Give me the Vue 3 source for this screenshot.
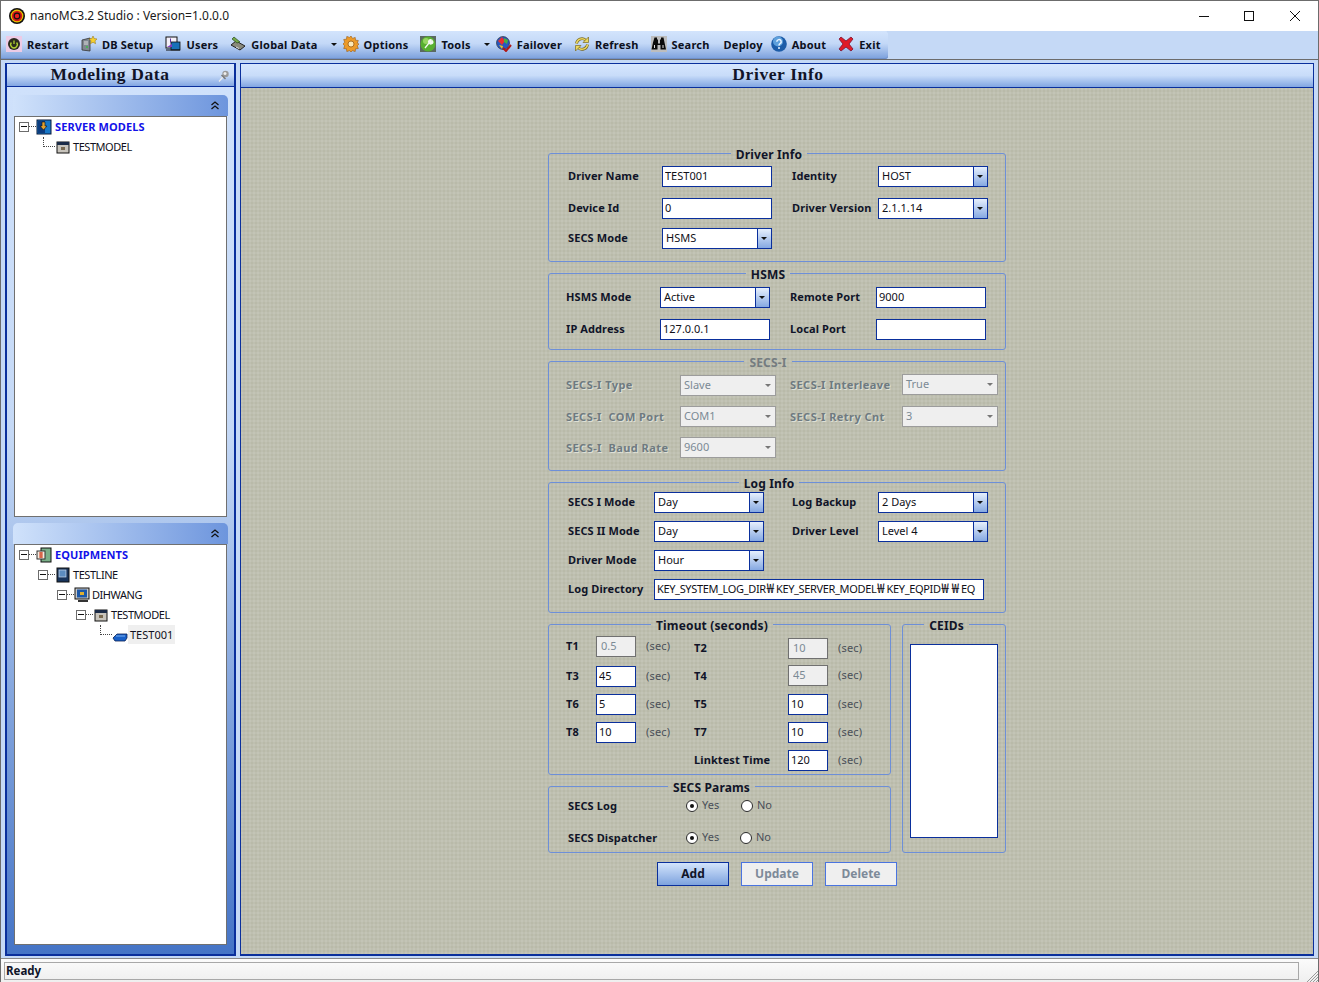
<template>
  <div class="window">
    <div class="titlebar">
      <svg class="logo" viewBox="0 0 16 16" width="16" height="16">
        <circle cx="8" cy="8" r="8" fill="#111"/>
        <circle cx="8" cy="8" r="6.4" fill="#e8c800"/>
        <circle cx="8" cy="8" r="5.2" fill="#d81818"/>
        <circle cx="8" cy="8" r="3.4" fill="#111"/>
        <circle cx="8" cy="8" r="2.2" fill="#e82020"/>
      </svg>
      <span class="title">nanoMC3.2 Studio : Version=1.0.0.0</span>
      <div class="winbtns">
        <svg width="12" height="12" viewBox="0 0 12 12"><path d="M1 6.5h10" stroke="#111" fill="none"/></svg>
        <svg width="12" height="12" viewBox="0 0 12 12"><rect x="1.5" y="1.5" width="9" height="9" stroke="#111" fill="none"/></svg>
        <svg width="12" height="12" viewBox="0 0 12 12"><path d="M1 1l10 10M11 1L1 11" stroke="#111" fill="none"/></svg>
      </div>
    </div>

    <div class="band">
      <div class="toolbar">
        <div class="tool">
          <svg viewBox="0 0 16 16"><rect width="16" height="16" fill="#eccbe6"/><circle cx="8" cy="8" r="6" fill="#2a2a1e"/><path d="M5.4 6.5a3.3 3.3 0 1 0 5.2 0M8 4.5v3.5" stroke="#b0d030" stroke-width="1.3" fill="none"/></svg>
          <span>Restart</span>
        </div>
        <div class="tool">
          <svg viewBox="0 0 16 16"><path d="M1 4l8-2v13l-8-1z" fill="#808890" stroke="#333" stroke-width=".8"/><path d="M3 6h4M3 8h4" stroke="#ddd"/><path d="M5 11h2" stroke="#38c048" stroke-width="1.5"/><path d="M12 0l1.2 2.6 2.8.3-2 2 .6 2.8-2.6-1.4-2.6 1.4.6-2.8-2-2 2.800-.3z" fill="#f6d030" stroke="#8a6a10" stroke-width=".5"/></svg>
          <span>DB Setup</span>
        </div>
        <div class="tool">
          <svg viewBox="0 0 16 16"><rect x="1" y="1" width="11" height="11" fill="#f4f0fa" stroke="#111"/><rect x="6" y="6" width="9" height="8" fill="#1870b8" stroke="#111" stroke-width=".8"/><path d="M2 11l5-3v3z" fill="#8038c0"/><path d="M5.500 2.500v4" stroke="#6030a0"/><path d="M1 14h14" stroke="#111"/></svg>
          <span>Users</span>
        </div>
        <div class="tool">
          <svg viewBox="0 0 16 16"><path d="M1 9l5-4 9 5-5 4z" fill="#8a8a7c" stroke="#222"/><path d="M2 3l2-2 6 5-3 1z" fill="#74a848" stroke="#2a4a20" stroke-width=".7"/><path d="M6 11l3 1.500" stroke="#ddd"/></svg>
          <span>Global Data</span>
        </div>
        <i class="caret"></i>
        <div class="tool">
          <svg viewBox="0 0 16 16"><path d="M8 0l1.500 2.400 2.700-1 .3 2.800 2.800.3-1 2.700L16 8l-1.700 1.800 1 2.700-2.800.3-.3 2.800-2.700-1L8 16l-1.500-1.400-2.700 1-.3-2.800-2.800-.3 1-2.700L0 8l1.700-1.800-1-2.700 2.800-.3.3-2.800 2.700 1z" fill="#ec9a28" stroke="#9a5a10" stroke-width=".6"/><circle cx="8" cy="8" r="3" fill="#fbe9b8" stroke="#9a5a10" stroke-width=".8"/></svg>
          <span>Options</span>
        </div>
        <div class="tool">
          <svg viewBox="0 0 16 16"><rect width="16" height="16" fill="#5a6a60"/><circle cx="8" cy="8" r="7.500" fill="#58b030"/><circle cx="6" cy="5" r="3" fill="#a8e070" opacity=".8"/><path d="M5 12l4-5M9 7a2 2 0 0 1 2.500-3L10 5.500l1 1L12.500 5A2 2 0 0 1 9 7z" stroke="#f4f8f0" stroke-width="1.300" fill="#f4f8f0"/></svg>
          <span>Tools</span>
        </div>
        <i class="caret"></i>
        <div class="tool">
          <svg viewBox="0 0 16 16"><circle cx="7" cy="7" r="6.500" fill="#2858c0" stroke="#222" stroke-width=".6"/><path d="M2 5l4-4 3 4-3 4z" fill="#e83030"/><path d="M8 2l4 2-1 4-3-2z" fill="#48b040"/><path d="M3 9l4 1-1 3z" fill="#f0c020"/><path d="M7 12l3 3 5-6" stroke="#b01818" stroke-width="2" fill="none"/></svg>
          <span>Failover</span>
        </div>
        <div class="tool">
          <svg viewBox="0 0 16 16"><path d="M2.500 7.500A5.500 5.500 0 0 1 11.500 4" stroke="#7a6a20" stroke-width="2.800" fill="none"/><path d="M2.500 7.500A5.500 5.500 0 0 1 11.500 4" stroke="#ecd860" stroke-width="1.500" fill="none"/><path d="M14.500 1v5.500H9z" fill="#ecd860" stroke="#7a6a20" stroke-width=".7"/><path d="M13.500 8.500A5.500 5.500 0 0 1 4.500 12" stroke="#7a6a20" stroke-width="2.800" fill="none"/><path d="M13.500 8.500A5.500 5.500 0 0 1 4.500 12" stroke="#ecd860" stroke-width="1.500" fill="none"/><path d="M1.500 15V9.500H7z" fill="#ecd860" stroke="#7a6a20" stroke-width=".7"/></svg>
          <span>Refresh</span>
        </div>
        <div class="tool">
          <svg viewBox="0 0 16 16"><rect width="16" height="16" fill="#bdbdbd"/><path d="M3.500 1.500h2.500v2H7v4h2v-4h1v-2h2.500l1 5 1.500 7H9.500V9h-3v4.500H.5L2 6.500z" fill="#0a0a0a"/><path d="M3.500 9v3M12 9v3" stroke="#ddd"/></svg>
          <span>Search</span>
        </div>
        <div class="tool deploy"><span>Deploy</span></div>
        <div class="tool about">
          <svg viewBox="0 0 16 16"><circle cx="8" cy="8" r="7.800" fill="#1c5ca8"/><circle cx="7" cy="5.500" r="5" fill="#5ea0dc"/><path d="M5.800 5.800a2.200 2.200 0 1 1 3.300 1.900c-.8.500-1.100.8-1.100 1.800" stroke="#eaf4ff" stroke-width="1.500" fill="none"/><circle cx="8" cy="12" r="1" fill="#eaf4ff"/></svg>
          <span>About</span>
        </div>
        <div class="tool">
          <svg viewBox="0 0 16 16"><path d="M1 3l2-2 5 4 5-4 2 2-4 5 4 5-2 2-5-4-5 4-2-2 4-5z" fill="#e01c28" stroke="#7c1030" stroke-width=".8"/></svg>
          <span>Exit</span>
        </div>
      </div>
    </div>

    <div class="main">
      <aside class="side">
        <div class="panel-head side-head">
          <h2>Modeling Data</h2>
          <svg class="pin" viewBox="0 0 12 12" width="12" height="12"><path d="M5 7L1 11.500" stroke="#eee" stroke-width="1.200"/><circle cx="7.500" cy="4" r="3.200" fill="#9a9a9a"/><circle cx="7" cy="3.500" r="1.500" fill="#eee"/><path d="M3.500 5l4 4" stroke="#777" stroke-width="1.500"/></svg>
        </div>
        <div class="side-body">
          <section class="tree-sec">
            <div class="sec-head"><svg width="8" height="9" viewBox="0 0 8 9"><path d="M.5 4L4 1l3.500 3M.5 8L4 5l3.500 3" stroke="#111" stroke-width="1.300" fill="none"/></svg></div>
            <div class="tree">
              <div v-for="n in serverTree" :key="n.name" class="node" :style="{ paddingLeft: 4 + n.level * 19 + 'px' }">
                <i v-if="n.open" class="box"></i>
                <i v-else class="elbow"></i>
                <i class="dash"></i>
                <TreeIcon :kind="n.icon" />
                <span :class="{ root: n.level === 0 }">{{ n.name }}</span>
              </div>
            </div>
          </section>
          <section class="tree-sec">
            <div class="sec-head"><svg width="8" height="9" viewBox="0 0 8 9"><path d="M.5 4L4 1l3.500 3M.5 8L4 5l3.500 3" stroke="#111" stroke-width="1.300" fill="none"/></svg></div>
            <div class="tree">
              <div v-for="n in equipTree" :key="n.name" class="node" :style="{ paddingLeft: 4 + n.level * 19 + 'px' }">
                <i v-if="n.open" class="box"></i>
                <i v-else class="elbow"></i>
                <i class="dash"></i>
                <TreeIcon :kind="n.icon" />
                <span :class="{ root: n.level === 0, sel: n.sel }">{{ n.name }}</span>
              </div>
            </div>
          </section>
        </div>
      </aside>

      <div class="content">
        <div class="panel-head"><h2>Driver Info</h2></div>
        <div class="canvas">
          <div class="form">
            <fieldset class="g-driver">
              <legend>Driver Info</legend>
              <div class="lbl">Driver Name</div>
              <input class="txt" value="TEST001" readonly />
              <div></div>
              <div class="lbl">Identity</div>
              <div class="combo">HOST</div>
              <div class="lbl">Device Id</div>
              <input class="txt" value="0" readonly />
              <div></div>
              <div class="lbl">Driver Version</div>
              <div class="combo">2.1.1.14</div>
              <div class="lbl">SECS Mode</div>
              <div class="combo">HSMS</div>
            </fieldset>

            <fieldset class="g-hsms">
              <legend>HSMS</legend>
              <div class="lbl">HSMS Mode</div>
              <div class="combo">Active</div>
              <div></div>
              <div class="lbl">Remote Port</div>
              <input class="txt" value="9000" readonly />
              <div class="lbl">IP Address</div>
              <input class="txt" value="127.0.0.1" readonly />
              <div></div>
              <div class="lbl">Local Port</div>
              <input class="txt" value="" readonly />
            </fieldset>

            <fieldset class="g-secs1">
              <legend class="off">SECS-I</legend>
              <div class="lbl off">SECS-I Type</div>
              <div class="combo off down">Slave</div>
              <div></div>
              <div class="lbl off">SECS-I Interleave</div>
              <div class="combo off">True</div>
              <div class="lbl off">SECS-I&nbsp; COM Port</div>
              <div class="combo off">COM1</div>
              <div></div>
              <div class="lbl off">SECS-I Retry Cnt</div>
              <div class="combo off">3</div>
              <div class="lbl off">SECS-I&nbsp; Baud Rate</div>
              <div class="combo off">9600</div>
            </fieldset>

            <fieldset class="g-log">
              <legend>Log Info</legend>
              <div class="lbl">SECS I Mode</div>
              <div class="combo">Day</div>
              <div></div>
              <div class="lbl">Log Backup</div>
              <div class="combo">2 Days</div>
              <div class="lbl">SECS II Mode</div>
              <div class="combo">Day</div>
              <div></div>
              <div class="lbl">Driver Level</div>
              <div class="combo">Level 4</div>
              <div class="lbl">Driver Mode</div>
              <div class="combo">Hour</div>
              <div class="full-row"></div>
              <div class="lbl">Log Directory</div>
              <div class="txt logdir">KEY_SYSTEM_LOG_DIR<b>₩</b>KEY_SERVER_MODEL<b>₩</b>KEY_EQPID<b>₩</b><b>₩</b>EQ</div>
            </fieldset>

            <div class="split">
              <div class="left">
                <fieldset class="g-time">
                  <legend>Timeout (seconds)</legend>
                  <template v-for="r in timeouts" :key="r.b">
                    <div class="lbl">{{ r.a }}</div>
                    <input v-if="r.av" class="txt" :class="{ off: r.aoff }" :value="r.av" readonly />
                    <div v-else></div>
                    <div></div>
                    <div class="sec">{{ r.av ? '(sec)' : '' }}</div>
                    <div class="lbl" :class="{ nudge: r.bn === 2 }">{{ r.b }}</div>
                    <input class="txt" :class="{ off: r.boff, nudge: r.bn === 2, lift: r.bn === -1 }" :value="r.bv" readonly />
                    <div></div>
                    <div class="sec" :class="{ nudge: r.bn === 2, lift: r.bn === -1 }">(sec)</div>
                  </template>
                </fieldset>

                <fieldset class="g-params">
                  <legend>SECS Params</legend>
                  <div class="lbl">SECS Log</div>
                  <label class="radio"><i class="dot on"></i>Yes</label>
                  <label class="radio"><i class="dot"></i>No</label>
                  <div class="lbl">SECS Dispatcher</div>
                  <label class="radio"><i class="dot on"></i>Yes</label>
                  <label class="radio shift"><i class="dot"></i>No</label>
                </fieldset>
              </div>

              <fieldset class="g-ceid">
                <legend>CEIDs</legend>
                <div class="list"></div>
              </fieldset>
            </div>

            <div class="buttons">
              <button class="btn primary">Add</button>
              <button class="btn">Update</button>
              <button class="btn">Delete</button>
            </div>
          </div>
        </div>
      </div>
    </div>

    <div class="status">
      <div class="status-box">Ready</div>
      <svg class="grip" width="12" height="12" viewBox="0 0 12 12"><path d="M12 1L1 12M12 4L4 12M12 7L7 12M12 10L10 12" stroke="#9a9a9a" fill="none"/></svg>
    </div>
  </div>
</template>

<script setup>
import { h } from 'vue';

const serverTree = [
  { name: 'SERVER MODELS', level: 0, open: true, icon: 'server' },
  { name: 'TESTMODEL', level: 1, icon: 'model' },
];

const equipTree = [
  { name: 'EQUIPMENTS', level: 0, open: true, icon: 'equip' },
  { name: 'TESTLINE', level: 1, open: true, icon: 'line' },
  { name: 'DIHWANG', level: 2, open: true, icon: 'monitor' },
  { name: 'TESTMODEL', level: 3, open: true, icon: 'model' },
  { name: 'TEST001', level: 4, icon: 'driver', sel: true },
];

const timeouts = [
  { a: 'T1', av: '0.5', aoff: true, b: 'T2', bv: '10', boff: true, bn: 2 },
  { a: 'T3', av: '45', b: 'T4', bv: '45', boff: true, bn: -1 },
  { a: 'T6', av: '5', b: 'T5', bv: '10' },
  { a: 'T8', av: '10', b: 'T7', bv: '10' },
  { a: '', b: 'Linktest Time', bv: '120' },
];

// small 16x16 tree glyphs, built from plain shapes
const shapes = {
  server: [
    ['rect', { width: 14, height: 14, x: 1, y: 1, fill: '#1878c8', stroke: '#0a1a3a' }],
    ['rect', { width: 7, height: 12, x: 2, y: 2, fill: '#0c3c80' }],
    ['path', { d: 'M6 3h3v4h2l-3.500 4L4 7h2z', fill: '#e0a030', stroke: '#111', 'stroke-width': 0.6 }],
  ],
  model: [
    ['rect', { width: 12, height: 11, x: 2, y: 3, fill: '#c8c4bc', stroke: '#111' }],
    ['rect', { width: 12, height: 3, x: 2, y: 3, fill: '#1c2c48' }],
    ['rect', { width: 4, height: 3, x: 6, y: 8, fill: '#7a6a50' }],
  ],
  equip: [
    ['rect', { width: 10, height: 14, x: 5, y: 1, fill: '#7ab088', stroke: '#111' }],
    ['rect', { width: 8, height: 8, x: 1, y: 4, fill: '#f4ece0', stroke: '#333' }],
    ['path', { d: 'M5 5v6M3 6h4M3 8h4M3 10h4', stroke: '#d03818' }],
  ],
  line: [
    ['rect', { width: 12, height: 14, x: 2, y: 1, fill: '#18345c', stroke: '#111' }],
    ['rect', { width: 7, height: 7, x: 4, y: 3, fill: '#5c8cc0', stroke: '#c8d8e8', 'stroke-width': 0.7 }],
  ],
  monitor: [
    ['rect', { width: 14, height: 11, x: 1, y: 1, fill: '#c8c8c8', stroke: '#111' }],
    ['rect', { width: 10, height: 8, x: 3, y: 2.500, fill: '#1c58a8' }],
    ['rect', { width: 4, height: 3, x: 6, y: 5, fill: '#e0b030' }],
    ['rect', { width: 10, height: 2, x: 4, y: 13, fill: '#333' }],
  ],
  driver: [
    ['path', { d: 'M1 11l4-4h10v4l-2 3H3z', fill: '#1860c8', stroke: '#0a2050', 'stroke-width': 0.8 }],
    ['path', { d: 'M4 9h9', stroke: '#7ab0f0' }],
  ],
};

const TreeIcon = (props) =>
  h('svg', { class: 'ticon', viewBox: '0 0 16 16', width: 16, height: 16 },
    shapes[props.kind].map(([tag, attrs]) => h(tag, attrs)));
TreeIcon.props = ['kind'];
</script>

<style>
html, body {
  margin: 0;
  padding: 0;
  background: #c5d9f6;
}
.ticon {
  flex: none;
  display: block;
}
</style>

<style scoped>
* {
  box-sizing: border-box;
}
.window {
  width: 1319px;
  height: 982px;
  display: flex;
  flex-direction: column;
  background: #c5d9f6;
  border: 1px solid #6c6c6c;
  border-bottom: 0;
  font-family: "Noto Sans", "Liberation Sans", sans-serif;
  font-size: 11px;
  color: #0c1020;
  overflow: hidden;
}

.titlebar {
  height: 30px;
  flex: none;
  background: #fff;
  display: flex;
  align-items: center;
  padding-left: 8px;
}
.logo {
  display: block;
  margin-right: 5px;
}
.title {
  font-size: 12px;
  color: #1a1a1a;
  margin-top: -2px;
}
.winbtns {
  margin-left: auto;
  display: flex;
  gap: 33px;
  padding-right: 17px;
}
.winbtns svg {
  display: block;
}
.winbtns svg:last-child {
  margin-left: 1px;
}

.band {
  height: 29px;
  flex: none;
  border-bottom: 1px solid #6c6c6c;
}
.toolbar {
  width: 887px;
  height: 28px;
  display: flex;
  align-items: center;
  gap: 12px;
  padding: 0 0 2px 5px;
  background: linear-gradient(#d3e4fc, #c3d8f7 45%, #7a9fdc);
  border-radius: 0 3px 3px 0;
  box-shadow: inset 0 -1px #6f8fc8;
  font-weight: 700;
  letter-spacing: 0.22px;
}
.tool {
  display: flex;
  align-items: center;
  gap: 5px;
  white-space: nowrap;
}
.tool svg {
  width: 16px;
  height: 16px;
  display: block;
}
.deploy {
  margin-left: 2px;
}
.about {
  margin-left: -4px;
}
.caret {
  width: 0;
  height: 0;
  border: 3px solid transparent;
  border-top: 3px solid #111;
  border-bottom: 0;
  margin-left: 1px;
  margin-right: -6px;
}

.main {
  flex: 1;
  min-height: 0;
  display: flex;
  gap: 4px;
  padding: 3px 4px 2px;
}

.panel-head {
  height: 25px;
  flex: none;
  display: flex;
  align-items: center;
  justify-content: center;
  background: linear-gradient(#d6e6fe, #c8dcf9 50%, #82a6e2);
  border-bottom: 1px solid #0a2f9c;
}
.panel-head h2 {
  margin: -2px 0 0 2px;
  font-family: "Liberation Serif", "DejaVu Serif", serif;
  font-size: 17.5px;
  letter-spacing: 0.6px;
  line-height: 22px;
  font-weight: 700;
  color: #111428;
}

.side {
  width: 231px;
  flex: none;
  display: flex;
  flex-direction: column;
  border: 2px solid #0a2f9c;
  border-top-width: 1px;
}
.side-head {
  position: relative;
  height: 23px;
  padding-right: 21px;
  border-bottom-width: 1px;
}
.side-head h2 {
  margin-left: 0;
}
.pin {
  position: absolute;
  right: 4px;
  top: 6px;
}
.side-body {
  flex: 1;
  padding: 8px 6px 0;
  display: flex;
  flex-direction: column;
  gap: 6px;
  background: linear-gradient(#cfe1fb, #c5d9f6 40%, #4574c6);
}
.sec-head {
  height: 21px;
  display: flex;
  justify-content: flex-end;
  align-items: center;
  padding-right: 9px;
  background: linear-gradient(90deg, #d0e2fb, #6d95dd);
  border-radius: 5px 5px 0 0;
}
.tree {
  height: 401px;
  margin: 0 1px;
  background: #fff;
  border: 1px solid #707070;
}
.node {
  height: 19px;
  margin-bottom: 1px;
  display: flex;
  align-items: center;
  position: relative;
  color: #101020;
  letter-spacing: -0.45px;
}
.node .ticon {
  margin-right: 2px;
}
.box {
  width: 10px;
  height: 10px;
  flex: none;
  border: 1px solid #6c6c6c;
  position: relative;
  background: #fff;
}
.box::after {
  content: "";
  position: absolute;
  left: 1px;
  right: 1px;
  top: 3px;
  background: #111;
  height: 1px;
}
.elbow {
  width: 10px;
  flex: none;
  height: 10px;
  position: relative;
  top: -5px;
  left: 5px;
  border-left: 1px dotted #444;
  border-bottom: 1px dotted #444;
}
.dash {
  width: 7px;
  flex: none;
  border-top: 1px dotted #444;
}
.root {
  color: #1212e8;
  font-weight: 700;
  letter-spacing: 0.1px;
  margin-left: 1px;
}
.sel {
  background: #efefef;
  padding: 2px;
  margin-left: -2px;
  letter-spacing: 0;
}

.content {
  flex: 1;
  display: flex;
  flex-direction: column;
  border: 1px solid #0a2f9c;
  border-bottom-width: 2px;
}
.content .panel-head {
  height: 24px;
}
.content .panel-head h2 {
  margin-top: -3px;
}
.canvas {
  flex: 1;
  background-color: #b9baa9;
  background-image:
    linear-gradient(90deg, rgba(255, 255, 255, 0.08) 50%, transparent 50%),
    linear-gradient(rgba(255, 255, 255, 0.08) 50%, transparent 50%);
  background-size: 4px 4px;
  padding-top: 57px;
}
.form {
  width: 458px;
  margin: 0 auto;
  display: flex;
  flex-direction: column;
  gap: 3px;
}

fieldset {
  margin: 0;
  padding: 0;
  min-width: 0;
  border: 1px solid #6d8fd8;
  border-radius: 3px;
  display: grid;
  align-content: start;
  align-items: start;
}
legend {
  margin: 0 auto;
  padding: 3px 5px 1px;
  line-height: 13px;
  font-size: 12px;
  font-weight: 700;
  letter-spacing: 0.15px;
  color: #101428;
}
legend.off {
  color: #747c80;
}

.lbl {
  line-height: 19px;
  font-weight: 700;
  white-space: nowrap;
  color: #101428;
  letter-spacing: 0.1px;
}
.lbl.off {
  line-height: 21px;
  color: #6e7a80;
  text-shadow: 1px 1px 0 #dfe0d6;
  letter-spacing: 0.45px;
}
.txt,
.combo {
  display: block;
  width: 100%;
  height: 21px;
  margin: 0;
  border: 1px solid #0a2f9c;
  background: #fff;
  font: inherit;
  color: #101018;
  line-height: 18px;
  padding: 0 0 2px 2px;
  border-radius: 0;
  outline: none;
}
.txt.off {
  background: #efefef;
  border-color: #707070;
  color: #7b8a95;
  padding-left: 4px;
}
.combo {
  position: relative;
  padding: 0 0 1px 3px;
}
.combo::before {
  content: "";
  position: absolute;
  right: 0;
  top: 0;
  bottom: 0;
  width: 13px;
  border-left: 1px solid #0a2f9c;
  background: linear-gradient(#e6effc, #86a9e2);
}
.combo::after {
  content: "";
  position: absolute;
  right: 4px;
  top: 8px;
  border: 3px solid transparent;
  border-top: 3px solid #111;
  border-bottom: 0;
}
.combo.off {
  background: #efefef;
  border-color: #9c9c9c;
  color: #7b8a95;
}
.combo.off::before {
  display: none;
}
.combo.off::after {
  border-top-color: #777;
}
.down {
  margin-top: 1px;
}
.nudge {
  margin-top: 2px;
}
.lift {
  margin-top: -1px;
}

.g-driver,
.g-hsms {
  grid-template-columns: 94px 110px 20px 86px 110px;
}
.g-driver {
  height: 117px;
  padding: 4px 35px 0 19px;
  grid-template-rows: 32px 30px 21px;
}
.g-hsms {
  height: 85px;
  padding: 5px 35px 0 17px;
  grid-template-rows: 32px 21px;
}
.g-secs1 {
  height: 118px;
  padding: 4px 35px 0 17px;
  grid-template-columns: 114px 96px 14px 112px 96px;
  grid-template-rows: 32px 31px 21px;
}
.g-log {
  height: 139px;
  padding: 1px 35px 0 19px;
  grid-template-columns: 86px 110px 28px 86px 110px;
  grid-template-rows: 29px 29px 29px 21px;
}
.full-row {
  grid-column: 3 / 6;
}
.logdir {
  grid-column: 2 / 6;
  width: 330px;
  padding: 0 0 1px 2px;
  white-space: nowrap;
  letter-spacing: -0.35px;
}
.logdir b {
  font-family: "Noto Sans CJK KR", "Noto Sans", sans-serif;
  font-size: 13px;
  line-height: 13px;
  font-weight: 400;
  letter-spacing: 2px;
  margin-left: 1px;
}

.split {
  display: flex;
  gap: 11px;
}
.left {
  width: 343px;
  display: flex;
  flex-direction: column;
  gap: 3px;
}
.g-time {
  height: 159px;
  padding: 3px 32px 0 17px;
  grid-template-columns: 30px 40px 10px 48px 94px 40px 10px 50px;
  grid-template-rows: 30px 28px 28px 28px 21px;
}
.sec {
  line-height: 19px;
  color: #4a4f58;
  letter-spacing: 0.2px;
}
.g-params {
  height: 75px;
  padding: 1px 35px 0 19px;
  grid-template-columns: 118px 55px 55px;
  grid-template-rows: 32px 21px;
}
.radio {
  display: flex;
  align-items: flex-start;
  gap: 4px;
  height: 21px;
  line-height: 17px;
  color: #4a4f58;
}
.radio.shift {
  margin-left: -1px;
}
.dot {
  width: 12px;
  height: 12px;
  border-radius: 50%;
  border: 1px solid #2a2a2a;
  background: #fff;
  position: relative;
  flex: none;
  margin-top: 4px;
}
.dot.on::after {
  content: "";
  position: absolute;
  left: 3px;
  top: 3px;
  width: 4px;
  height: 4px;
  border-radius: 50%;
  background: #111;
}
.g-ceid {
  flex: 1;
  height: 237px;
  padding: 11px 22px 0 7px;
}
.list {
  width: 88px;
  height: 194px;
  background: #fff;
  border: 1px solid #0a2f9c;
}

.buttons {
  display: flex;
  gap: 12px;
  margin-top: 6px;
  padding-left: 109px;
}
.btn {
  width: 72px;
  height: 24px;
  padding: 0 0 2px;
  font-family: inherit;
  font-size: 12px;
  font-weight: 700;
  color: #7d8a99;
  background: #efefef;
  border: 1px solid #4a74e0;
  border-radius: 0;
}
.btn.primary {
  color: #101428;
  background: linear-gradient(#d3e4fc, #7ea3de);
  border-color: #0a2f9c;
}

.status {
  height: 24px;
  flex: none;
  border-top: 1px solid #8a8a8a;
  background: linear-gradient(#fbfbfb, #efefef);
  position: relative;
  padding: 3px 0 0 3px;
}
.status-box {
  width: 1295px;
  height: 18px;
  border: 1px solid #a8a8a8;
  font-weight: 700;
  line-height: 15px;
  padding-left: 1px;
  font-size: 11.5px;
  color: #101428;
}
.grip {
  position: absolute;
  right: 0;
  bottom: 0;
}
</style>
